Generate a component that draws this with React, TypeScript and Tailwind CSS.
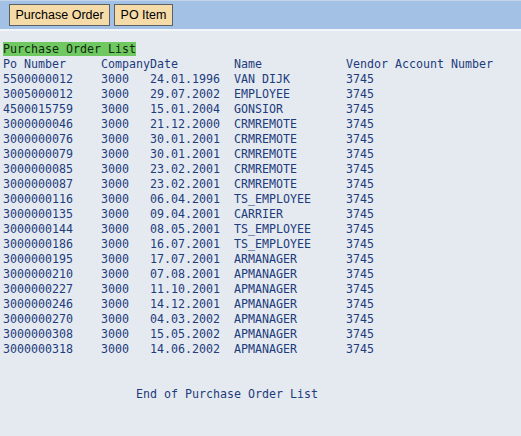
import React from 'react';

const rows: [string, string, string, string, string][] = [
  ['5500000012', '3000', '24.01.1996', 'VAN DIJK', '3745'],
  ['3005000012', '3000', '29.07.2002', 'EMPLOYEE', '3745'],
  ['4500015759', '3000', '15.01.2004', 'GONSIOR', '3745'],
  ['3000000046', '3000', '21.12.2000', 'CRMREMOTE', '3745'],
  ['3000000076', '3000', '30.01.2001', 'CRMREMOTE', '3745'],
  ['3000000079', '3000', '30.01.2001', 'CRMREMOTE', '3745'],
  ['3000000085', '3000', '23.02.2001', 'CRMREMOTE', '3745'],
  ['3000000087', '3000', '23.02.2001', 'CRMREMOTE', '3745'],
  ['3000000116', '3000', '06.04.2001', 'TS_EMPLOYEE', '3745'],
  ['3000000135', '3000', '09.04.2001', 'CARRIER', '3745'],
  ['3000000144', '3000', '08.05.2001', 'TS_EMPLOYEE', '3745'],
  ['3000000186', '3000', '16.07.2001', 'TS_EMPLOYEE', '3745'],
  ['3000000195', '3000', '17.07.2001', 'ARMANAGER', '3745'],
  ['3000000210', '3000', '07.08.2001', 'APMANAGER', '3745'],
  ['3000000227', '3000', '11.10.2001', 'APMANAGER', '3745'],
  ['3000000246', '3000', '14.12.2001', 'APMANAGER', '3745'],
  ['3000000270', '3000', '04.03.2002', 'APMANAGER', '3745'],
  ['3000000308', '3000', '15.05.2002', 'APMANAGER', '3745'],
  ['3000000318', '3000', '14.06.2002', 'APMANAGER', '3745'],
];

// fixed list columns: po 0, company 14, date 21, name 33, vendor 49
const line = (po: string, co: string, date: string, name: string, vendor: string) =>
  po.padEnd(14) + co.padEnd(7) + date.padEnd(12) + name.padEnd(16) + vendor;

export default function App() {
  return (
    <div className="w-[521px] h-[436px] overflow-hidden bg-[#e5eaf1]">
      {/* Application toolbar */}
      <div className="h-[31px] border-t border-t-[#c5d5ea] border-b-2 border-b-[#f2f5f9] bg-[#a3c1e5] flex items-center gap-[4px] pl-[9px]">
        <button className="w-[101px] h-[22px] bg-[#f5dba8] border border-[#5b5f66] text-[12.5px] text-black font-['Liberation_Sans',sans-serif] leading-none">
          Purchase Order
        </button>
        <button className="w-[59px] h-[22px] bg-[#f5dba8] border border-[#5b5f66] text-[12.5px] text-black font-['Liberation_Sans',sans-serif] leading-none">
          PO Item
        </button>
      </div>

      {/* List output */}
      <div className="pt-[11px] pl-[3px] font-['DejaVu_Sans_Mono',monospace] text-[11.63px] leading-[15px] text-[#1d3c7c] whitespace-pre">
        <div>
          <span className="bg-[#6fc860] text-[#0f2a10]">Purchase Order List</span>
        </div>
        <div>{'Po Number'.padEnd(14) + 'CompanyDate'.padEnd(19) + 'Name'.padEnd(16) + 'Vendor Account Number'}</div>
        {rows.map((r, i) => (
          <div key={i}>{line(...r)}</div>
        ))}
        <div>&nbsp;</div>
        <div>&nbsp;</div>
        <div>{' '.repeat(19) + 'End of Purchase Order List'}</div>
      </div>
    </div>
  );
}
